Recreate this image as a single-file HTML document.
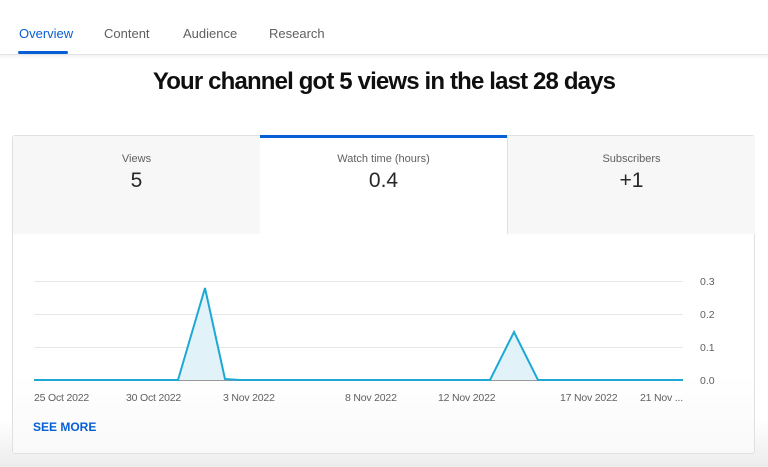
<!DOCTYPE html>
<html><head><style>
body{margin:0;width:768px;height:467px;background:#fff;font-family:"Liberation Sans",Arial,sans-serif;position:relative;overflow:hidden}
.nav{position:absolute;top:0;left:0;width:768px;height:54px;border-bottom:1px solid #e4e4e4;box-shadow:0 2px 3px rgba(0,0,0,.06)}
.nav span{position:absolute;top:26px;font-size:13px;color:#606060}
.nav .act{color:#065fd4}
.ul{position:absolute;left:18px;top:51px;width:50px;height:3px;background:#065fd4;border-radius:2px}
h1{position:absolute;top:68px;left:0;width:768px;text-align:center;margin:0;font-size:24px;font-weight:bold;color:#0f0f0f;letter-spacing:-0.85px}
.bg{position:absolute;top:420px;left:0;width:768px;height:47px;background:linear-gradient(#fff,#ececec)}
.card{position:absolute;left:12px;top:135px;width:741px;height:317px;border:1px solid #e0e0e0;border-radius:3px;background:linear-gradient(#fff 75%,#f9f9f9)}
.tab{position:absolute;top:0;height:98px;width:247px;background:#f7f7f7;text-align:center}
.tab .l{margin-top:17px;font-size:11px;color:#606060}
.tab .v{margin-top:4px;font-size:21px;color:#282828}
.sel{background:#fff;border-top:3px solid #065fd4;top:-1px;height:96px}
.sel .l{margin-top:15px}
.x{position:absolute;top:392px;font-size:10.5px;color:#606060;letter-spacing:-0.2px}
.y{position:absolute;left:700px;font-size:10.5px;color:#606060}
</style></head><body>
<div class="bg"></div>
<div class="nav">
<span class="act" style="left:19px">Overview</span>
<span style="left:104px">Content</span>
<span style="left:183px">Audience</span>
<span style="left:269px">Research</span>
<div class="ul"></div></div>
<h1>Your channel got 5 views in the last 28 days</h1>
<div class="card">
<div class="tab" style="left:0;border-right:1px solid #e0e0e0"><div class="l">Views</div><div class="v">5</div></div>
<div class="tab sel" style="left:247px;width:247px"><div class="l">Watch time (hours)</div><div class="v">0.4</div></div>
<div class="tab" style="left:494px;border-left:1px solid #e0e0e0"><div class="l">Subscribers</div><div class="v">+1</div></div>
</div>
<svg style="position:absolute;left:0;top:0" width="768" height="467">
<g stroke="#e6e6e6" stroke-width="1"><line x1="34" y1="281.5" x2="683" y2="281.5"/><line x1="34" y1="314.5" x2="683" y2="314.5"/><line x1="34" y1="347.5" x2="683" y2="347.5"/></g>
<line x1="34" y1="380.5" x2="683" y2="380.5" stroke="#999"/>
<polygon points="178,380 205,288 225,380" fill="#e1f3f9"/>
<polygon points="490,380 514,332 538,380" fill="#e1f3f9"/>
<polyline points="34,380 178,380 205,288 225,379 240,380 490,380 514,332 538,380 683,380" fill="none" stroke="#1ea8d4" stroke-width="2"/>
</svg>
<span class="x" style="left:34px">25 Oct 2022</span>
<span class="x" style="left:126px">30 Oct 2022</span>
<span class="x" style="left:223px">3 Nov 2022</span>
<span class="x" style="left:345px">8 Nov 2022</span>
<span class="x" style="left:438px">12 Nov 2022</span>
<span class="x" style="left:560px">17 Nov 2022</span>
<span class="x" style="left:640px">21 Nov ...</span>
<span class="y" style="top:276px">0.3</span>
<span class="y" style="top:309px">0.2</span>
<span class="y" style="top:342px">0.1</span>
<span class="y" style="top:375px">0.0</span>
<div style="position:absolute;left:33px;top:420px;font-size:12px;font-weight:bold;color:#065fd4">SEE MORE</div>
</body></html>
